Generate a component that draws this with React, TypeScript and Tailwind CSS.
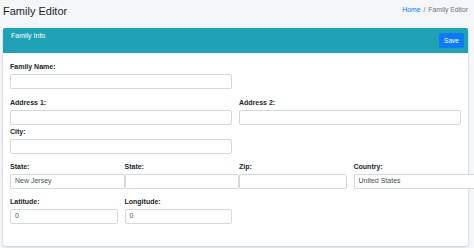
import React from "react";

const Label = ({ children }: { children: React.ReactNode }) => (
  <div className="text-[7px] leading-[8px] font-bold text-[#212529] mb-[3px] whitespace-nowrap">{children}</div>
);

const Input = ({ value = "", className = "" }: { value?: string; className?: string }) => (
  <div
    className={
      "h-[15px] bg-white border border-[#d4d9de] rounded-[2px] px-[4px] flex items-center text-[7px] text-[#495057] whitespace-nowrap " +
      className
    }
  >
    {value}
  </div>
);

export default function App() {
  return (
    <div
      className="w-[474px] h-[248px] overflow-hidden bg-[#f4f6f9]"
      style={{ fontFamily: '"Liberation Sans", Arial, sans-serif' }}
    >
      <div className="flex items-start justify-between pt-[5px] pl-[3px] pr-[6px]">
        <div className="text-[11px] leading-[13px] font-medium text-[#212529]">Family Editor</div>
        <div className="mt-[1px] text-[6.8px] leading-[8px] text-[#6c757d] whitespace-nowrap">
          <span className="text-[#007bff]">Home</span>
          <span className="px-[3px]">/</span>
          <span>Family Editor</span>
        </div>
      </div>

      <div className="ml-[3px] mt-[10px] w-[465px] bg-white rounded-[2px] shadow-[0_0_1px_rgba(0,0,0,0.15),0_1px_3px_rgba(0,0,0,0.18)]">
        <div className="h-[25px] bg-[#1fa2b6] rounded-t-[2px] flex items-start justify-between pl-[8px] pr-[4px]">
          <div className="mt-[4px] text-[7px] leading-[8px] text-white">Family Info</div>
          <div className="mt-[5px] w-[25px] h-[15px] bg-[#0d7bf5] rounded-[2px] flex items-center justify-center text-[6.5px] text-white">
            Save
          </div>
        </div>

        <div className="px-[7px] pt-[10px] pb-[22px]">
          <div className="grid grid-cols-4 gap-x-[7px]">
            <div className="col-span-2">
              <Label>Family Name:</Label>
              <Input />
            </div>
          </div>

          <div className="grid grid-cols-4 gap-x-[7px] mt-[10px]">
            <div className="col-span-2">
              <Label>Address 1:</Label>
              <Input />
            </div>
            <div className="col-span-2">
              <Label>Address 2:</Label>
              <Input />
            </div>
          </div>

          <div className="grid grid-cols-4 gap-x-[7px] mt-[3px]">
            <div className="col-span-2">
              <Label>City:</Label>
              <Input />
            </div>
          </div>

          <div className="grid grid-cols-4 gap-x-[7px] mt-[9px]">
            <div>
              <Label>State:</Label>
              <Input value="New Jersey" className="w-[114.5px]" />
            </div>
            <div>
              <Label>State:</Label>
              <Input className="w-[114.5px]" />
            </div>
            <div>
              <Label>Zip:</Label>
              <Input />
            </div>
            <div>
              <Label>Country:</Label>
              <Input value="United States" className="w-[130px] relative" />
            </div>
          </div>

          <div className="grid grid-cols-4 gap-x-[7px] mt-[9px]">
            <div>
              <Label>Latitude:</Label>
              <Input value="0" />
            </div>
            <div>
              <Label>Longitude:</Label>
              <Input value="0" />
            </div>
          </div>
        </div>
      </div>
    </div>
  );
}
